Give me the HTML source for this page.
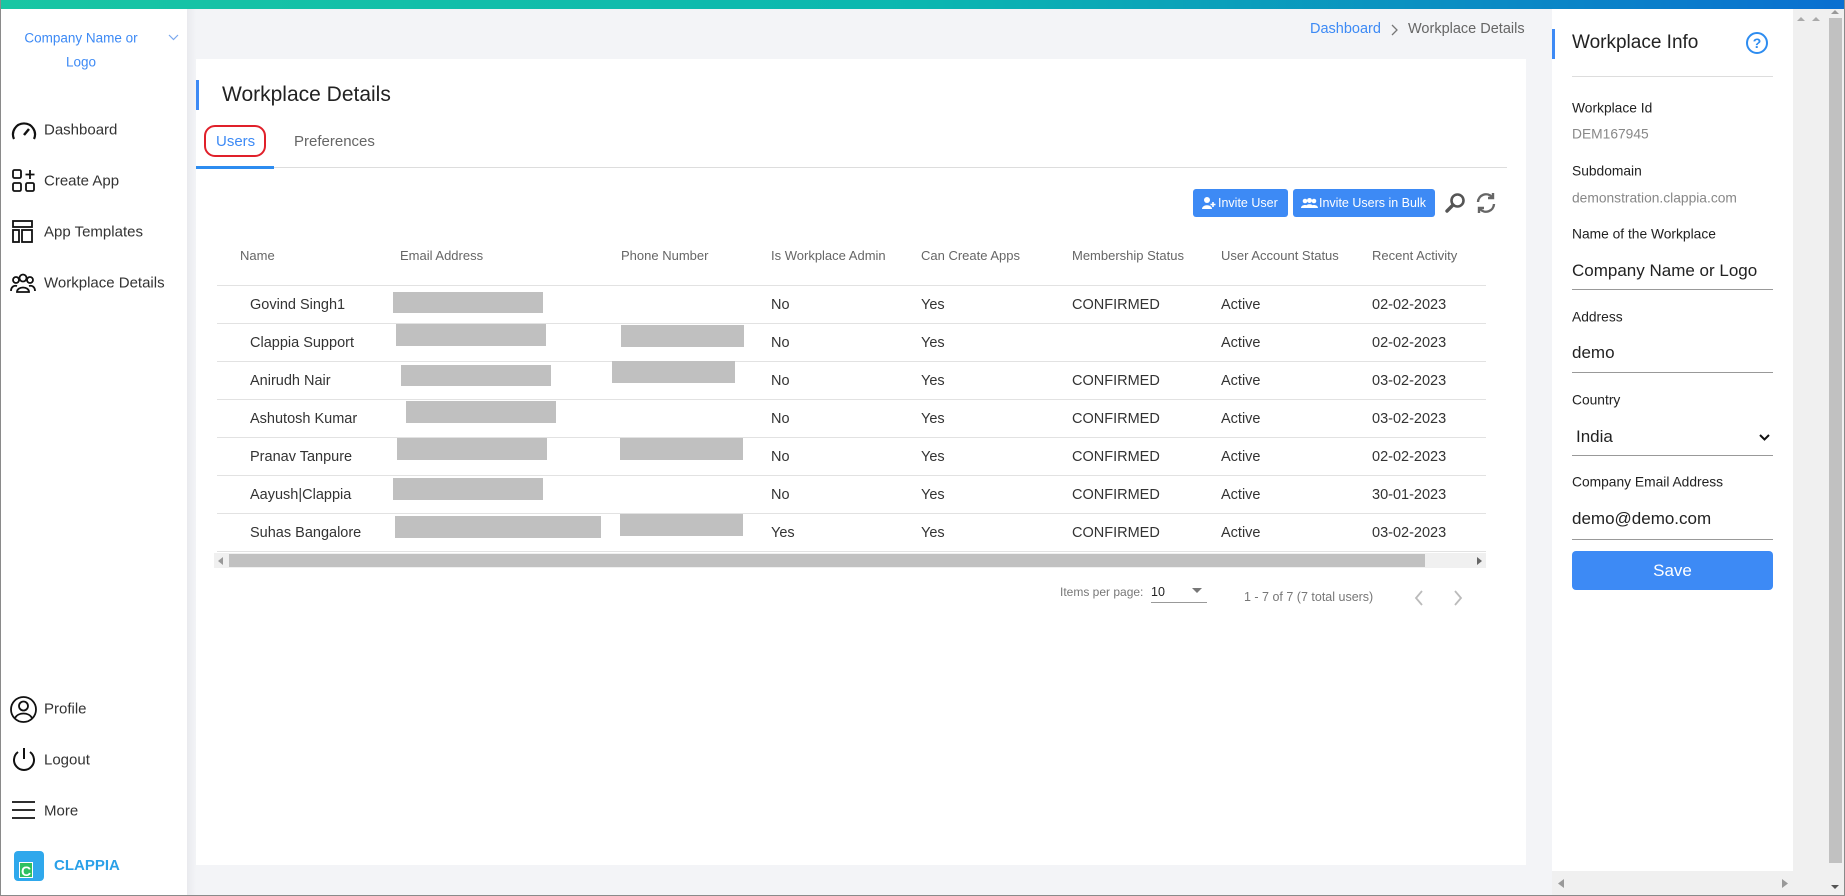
<!DOCTYPE html>
<html><head><meta charset="utf-8"><style>
*{margin:0;padding:0;box-sizing:border-box}
body{width:1845px;height:896px;overflow:hidden;position:relative;background:#f3f4f7;font-family:"Liberation Sans",sans-serif;color:#333}
.a{position:absolute;white-space:nowrap}
.nav{position:absolute;left:44px;font-size:15px;color:#333;transform:translateY(-50%)}
.ic{position:absolute;left:10px}
.th{position:absolute;top:248px;font-size:13px;color:#666}
.cell{position:absolute;font-size:14.5px;color:#333;transform:translateY(-50%)}
.line{position:absolute;left:217px;width:1269px;height:1px;background:#e2e2e2}
.red{position:absolute;background:#c0c0c0}
.lbl{position:absolute;left:1572px;font-size:13.8px;color:#222;transform:translateY(-50%)}
.val{position:absolute;left:1572px;font-size:13.8px;color:#888;transform:translateY(-50%)}
.inp{position:absolute;left:1572px;font-size:17px;color:#222;transform:translateY(-50%)}
.ul{position:absolute;left:1572px;width:201px;height:1px;background:#999}
</style></head><body>
<div class="a" style="left:0;top:0;width:1845px;height:9px;background:linear-gradient(90deg,#19c6a3,#0bb7b0 50%,#0a6fd1)"></div>
<!-- sidebar -->
<div class="a" style="left:1px;top:9px;width:186px;height:886px;background:#fff"></div>
<div class="a" style="left:187px;top:9px;width:9px;height:886px;background:linear-gradient(90deg,#e9eaee,#f3f4f7)"></div>
<div class="a" style="left:0;top:38px;width:162px;text-align:center;font-size:13.5px;color:#3d8af5;transform:translateY(-50%)">Company Name or</div>
<div class="a" style="left:0;top:62px;width:162px;text-align:center;font-size:13.5px;color:#3d8af5;transform:translateY(-50%)">Logo</div>
<svg class="a" style="left:168px;top:34px" width="11" height="8"><path d="M1 1l4.5 4.5L10 1" stroke="#7aa8ee" fill="none" stroke-width="1.2"/></svg>

<svg class="ic" style="top:117px" width="28" height="26" viewBox="0 0 28 26"><path d="M4 22A11 11 0 1 1 24 22" fill="none" stroke="#111" stroke-width="2.2"/><path d="M14 18l5-6" stroke="#111" stroke-width="2.5"/></svg>
<div class="nav" style="top:130px">Dashboard</div>
<svg class="ic" style="top:169px;left:12px" width="24" height="24" viewBox="0 0 24 24" fill="none" stroke="#111" stroke-width="1.8"><rect x="1" y="1" width="8" height="8" rx="1.5"/><rect x="1" y="14" width="8" height="8" rx="1.5"/><rect x="14" y="14" width="8" height="8" rx="1.5"/><path d="M18 1v9M13.5 5.5h9"/></svg>
<div class="nav" style="top:181px">Create App</div>
<svg class="ic" style="top:220px;left:12px" width="24" height="24" viewBox="0 0 24 24" fill="none" stroke="#111" stroke-width="1.8"><rect x="1" y="1" width="19" height="6"/><rect x="1" y="10" width="6" height="12"/><rect x="10" y="10" width="10" height="12"/></svg>
<div class="nav" style="top:232px">App Templates</div>
<svg class="ic" style="top:272px" width="26" height="22" viewBox="0 0 26 22" fill="none" stroke="#111" stroke-width="1.8"><circle cx="13" cy="6" r="3.5"/><circle cx="6" cy="8" r="3"/><circle cx="20" cy="8" r="3"/><path d="M7 20c0-6 12-6 12 0zM1 19c0-4 3-6 6-5M25 19c0-4-3-6-6-5"/></svg>
<div class="nav" style="top:283px">Workplace Details</div>

<svg class="ic" style="top:696px" width="27" height="27" viewBox="0 0 27 27" fill="none" stroke="#111" stroke-width="1.8"><circle cx="13.5" cy="13.5" r="12.5"/><circle cx="13.5" cy="10" r="4.5"/><path d="M5 22c3-6 14-6 17 0"/></svg>
<div class="nav" style="top:709px">Profile</div>
<svg class="ic" style="top:747px;left:12px" width="24" height="26" viewBox="0 0 24 26" fill="none" stroke="#111" stroke-width="2"><path d="M12 1v11"/><path d="M6 5a10 10 0 1 0 12 0"/></svg>
<div class="nav" style="top:760px">Logout</div>
<svg class="ic" style="top:801px;left:12px" width="23" height="18"><path d="M0 1h23M0 9h23M0 17h23" stroke="#111" stroke-width="1.8"/></svg>
<div class="nav" style="top:811px">More</div>
<div class="a" style="left:14px;top:851px;width:30px;height:30px;background:#2fa8ec;border-radius:4px"></div>
<div class="a" style="left:19px;top:862px;width:14px;height:16px;background:#2ec05f;color:#fff;font-weight:bold;font-size:14px;line-height:16px;text-align:center;border:1px solid #fff">C</div>
<div class="a" style="left:54px;top:857px;font-size:15px;font-weight:bold;color:#2aa0e8">CLAPPIA</div>

<!-- breadcrumb -->
<div class="a" style="left:1310px;top:21px;font-size:14.5px;color:#3d8af5">Dashboard</div>
<svg class="a" style="left:1391px;top:24px" width="8" height="12"><path d="M1 1l5 5-5 5" stroke="#777" fill="none" stroke-width="1.3"/></svg>
<div class="a" style="left:1408px;top:21px;font-size:14.5px;color:#666">Workplace Details</div>

<!-- card -->
<div class="a" style="left:196px;top:59px;width:1330px;height:806px;background:#fff"></div>
<div class="a" style="left:196px;top:80px;width:3px;height:30px;background:#3d8af5"></div>
<div class="a" style="left:222px;top:83px;font-size:21px;color:#222">Workplace Details</div>
<div class="a" style="left:204px;top:125px;width:62px;height:32px;border:2px solid #e0202a;border-radius:11px"></div>
<div class="a" style="left:216px;top:133px;font-size:15px;color:#3d8af5">Users</div>
<div class="a" style="left:294px;top:133px;font-size:15px;color:#666">Preferences</div>
<div class="a" style="left:196px;top:167px;width:1311px;height:1px;background:#ddd"></div>
<div class="a" style="left:196px;top:166px;width:78px;height:3px;background:#2d8cf0"></div>

<div class="a" style="left:1193px;top:189px;width:95px;height:28px;background:#3d8af5;border-radius:3px;color:#fff;font-size:12.5px;line-height:28px;padding-left:25px">Invite User</div>
<svg class="a" style="left:1201px;top:196px" width="16" height="14" viewBox="0 0 16 14" fill="#fff"><circle cx="6" cy="4" r="3"/><path d="M1 13c0-5 10-5 10 0z"/><path d="M12 6v5M9.5 8.5h5" stroke="#fff" stroke-width="1.6"/></svg>
<div class="a" style="left:1293px;top:189px;width:142px;height:28px;background:#3d8af5;border-radius:3px;color:#fff;font-size:12.5px;line-height:28px;padding-left:26px">Invite Users in Bulk</div>
<svg class="a" style="left:1301px;top:197px" width="17" height="12" viewBox="0 0 17 12" fill="#fff"><circle cx="4" cy="4" r="2.3"/><circle cx="8.5" cy="3.5" r="2.5"/><circle cx="13" cy="4" r="2.3"/><path d="M0 11c0-4 8-4 8 0zM9 11c0-4 8-4 8 0zM4 11c0-5 9-5 9 0z"/></svg>
<svg class="a" style="left:1445px;top:192px" width="21" height="21" viewBox="0 0 21 21" fill="none" stroke="#555"><circle cx="12.5" cy="8.5" r="6" stroke-width="2.6"/><path d="M8 13l-6 6" stroke-width="3.4" stroke-linecap="round"/></svg>
<svg class="a" style="left:1475px;top:192px" width="22" height="22" viewBox="0 0 22 22" fill="none" stroke="#666" stroke-width="2.4"><path d="M3 10A8 8 0 0 1 17 5"/><path d="M19 12A8 8 0 0 1 5 17"/><path d="M18 1v5h-5M4 21v-5h5"/></svg>

<div class="th" style="left:240px">Name</div>
<div class="th" style="left:400px">Email Address</div>
<div class="th" style="left:621px">Phone Number</div>
<div class="th" style="left:771px">Is Workplace Admin</div>
<div class="th" style="left:921px">Can Create Apps</div>
<div class="th" style="left:1072px">Membership Status</div>
<div class="th" style="left:1221px">User Account Status</div>
<div class="th" style="left:1372px">Recent Activity</div>

<div class="line" style="top:285px"></div>
<div class="line" style="top:323px"></div>
<div class="line" style="top:361px"></div>
<div class="line" style="top:399px"></div>
<div class="line" style="top:437px"></div>
<div class="line" style="top:475px"></div>
<div class="line" style="top:513px"></div>
<div class="line" style="top:551px"></div>

<div class="cell" style="left:250px;top:305px">Govind Singh1</div><div class="cell" style="left:771px;top:305px">No</div><div class="cell" style="left:921px;top:305px">Yes</div><div class="cell" style="left:1072px;top:305px">CONFIRMED</div><div class="cell" style="left:1221px;top:305px">Active</div><div class="cell" style="left:1372px;top:305px">02-02-2023</div>
<div class="cell" style="left:250px;top:343px">Clappia Support</div><div class="cell" style="left:771px;top:343px">No</div><div class="cell" style="left:921px;top:343px">Yes</div><div class="cell" style="left:1221px;top:343px">Active</div><div class="cell" style="left:1372px;top:343px">02-02-2023</div>
<div class="cell" style="left:250px;top:381px">Anirudh Nair</div><div class="cell" style="left:771px;top:381px">No</div><div class="cell" style="left:921px;top:381px">Yes</div><div class="cell" style="left:1072px;top:381px">CONFIRMED</div><div class="cell" style="left:1221px;top:381px">Active</div><div class="cell" style="left:1372px;top:381px">03-02-2023</div>
<div class="cell" style="left:250px;top:419px">Ashutosh Kumar</div><div class="cell" style="left:771px;top:419px">No</div><div class="cell" style="left:921px;top:419px">Yes</div><div class="cell" style="left:1072px;top:419px">CONFIRMED</div><div class="cell" style="left:1221px;top:419px">Active</div><div class="cell" style="left:1372px;top:419px">03-02-2023</div>
<div class="cell" style="left:250px;top:457px">Pranav Tanpure</div><div class="cell" style="left:771px;top:457px">No</div><div class="cell" style="left:921px;top:457px">Yes</div><div class="cell" style="left:1072px;top:457px">CONFIRMED</div><div class="cell" style="left:1221px;top:457px">Active</div><div class="cell" style="left:1372px;top:457px">02-02-2023</div>
<div class="cell" style="left:250px;top:495px">Aayush|Clappia</div><div class="cell" style="left:771px;top:495px">No</div><div class="cell" style="left:921px;top:495px">Yes</div><div class="cell" style="left:1072px;top:495px">CONFIRMED</div><div class="cell" style="left:1221px;top:495px">Active</div><div class="cell" style="left:1372px;top:495px">30-01-2023</div>
<div class="cell" style="left:250px;top:533px">Suhas Bangalore</div><div class="cell" style="left:771px;top:533px">Yes</div><div class="cell" style="left:921px;top:533px">Yes</div><div class="cell" style="left:1072px;top:533px">CONFIRMED</div><div class="cell" style="left:1221px;top:533px">Active</div><div class="cell" style="left:1372px;top:533px">03-02-2023</div>

<div class="red" style="left:393px;top:292px;width:150px;height:21px"></div>
<div class="red" style="left:396px;top:324px;width:150px;height:22px"></div>
<div class="red" style="left:621px;top:325px;width:123px;height:22px"></div>
<div class="red" style="left:401px;top:365px;width:150px;height:21px"></div>
<div class="red" style="left:612px;top:361px;width:123px;height:22px"></div>
<div class="red" style="left:406px;top:401px;width:150px;height:22px"></div>
<div class="red" style="left:397px;top:438px;width:150px;height:22px"></div>
<div class="red" style="left:620px;top:438px;width:123px;height:22px"></div>
<div class="red" style="left:393px;top:478px;width:150px;height:22px"></div>
<div class="red" style="left:395px;top:516px;width:206px;height:22px"></div>
<div class="red" style="left:620px;top:514px;width:123px;height:22px"></div>

<div class="a" style="left:214px;top:553px;width:1272px;height:15px;background:#f0f0f0"></div>
<div class="a" style="left:229px;top:554px;width:1196px;height:13px;background:#c1c1c1"></div>
<svg class="a" style="left:218px;top:557px" width="5" height="8"><path d="M5 0v8L0 4z" fill="#999"/></svg>
<svg class="a" style="left:1477px;top:557px" width="5" height="8"><path d="M0 0v8l5-4z" fill="#666"/></svg>

<div class="a" style="left:1060px;top:585px;font-size:12px;color:#777">Items per page:</div>
<div class="a" style="left:1151px;top:585px;font-size:12.5px;color:#222">10</div>
<svg class="a" style="left:1192px;top:588px" width="10" height="6"><path d="M0 0h10L5 5z" fill="#777"/></svg>
<div class="a" style="left:1151px;top:602px;width:56px;height:1px;background:#999"></div>
<div class="a" style="left:1244px;top:590px;font-size:12.5px;color:#777">1 - 7 of 7 (7 total users)</div>
<svg class="a" style="left:1414px;top:590px" width="10" height="16"><path d="M8 1L2 8l6 7" stroke="#bbb" fill="none" stroke-width="1.8"/></svg>
<svg class="a" style="left:1453px;top:590px" width="10" height="16"><path d="M2 1l6 7-6 7" stroke="#bbb" fill="none" stroke-width="1.8"/></svg>

<!-- right panel -->
<div class="a" style="left:1552px;top:9px;width:241px;height:887px;background:#fff"></div>
<div class="a" style="left:1793px;top:9px;width:33px;height:887px;background:#f0f0f0"></div>
<div class="a" style="left:1552px;top:871px;width:241px;height:25px;background:#f0f0f0"></div>
<svg class="a" style="left:1558px;top:879px" width="6" height="9"><path d="M6 0v9L0 4.5z" fill="#999"/></svg>
<svg class="a" style="left:1782px;top:879px" width="6" height="9"><path d="M0 0v9l6-4.5z" fill="#999"/></svg>
<div class="a" style="left:1552px;top:29px;width:3px;height:30px;background:#3d8af5"></div>
<div class="a" style="left:1572px;top:32px;font-size:19px;color:#222">Workplace Info</div>
<div class="a" style="left:1746px;top:32px;width:22px;height:22px;border:2px solid #2d8cf0;border-radius:50%;color:#2d8cf0;font-size:14px;font-weight:bold;text-align:center;line-height:18px">?</div>
<div class="a" style="left:1572px;top:76px;width:201px;height:1px;background:#ddd"></div>
<div class="lbl" style="top:108px">Workplace Id</div>
<div class="val" style="top:134px">DEM167945</div>
<div class="lbl" style="top:171px">Subdomain</div>
<div class="val" style="top:198px">demonstration.clappia.com</div>
<div class="lbl" style="top:234px">Name of the Workplace</div>
<div class="inp" style="top:271px">Company Name or Logo</div>
<div class="ul" style="top:289px"></div>
<div class="lbl" style="top:317px">Address</div>
<div class="inp" style="top:353px">demo</div>
<div class="ul" style="top:372px"></div>
<div class="lbl" style="top:400px">Country</div>
<div class="inp" style="top:437px;left:1576px">India</div>
<svg class="a" style="left:1759px;top:434px" width="11" height="7"><path d="M1 1l4.5 4.5L10 1" stroke="#111" fill="none" stroke-width="2"/></svg>
<div class="ul" style="top:455px"></div>
<div class="lbl" style="top:482px">Company Email Address</div>
<div class="inp" style="top:519px">demo@demo.com</div>
<div class="ul" style="top:539px"></div>
<div class="a" style="left:1572px;top:551px;width:201px;height:39px;background:#3d8af5;border-radius:4px;color:#fff;font-size:17px;line-height:39px;text-align:center">Save</div>
<svg class="a" style="left:1797px;top:16px" width="30" height="6"><path d="M0 5l4-4 4 4zM15 5l4-4 4 4z" fill="#aaa"/></svg>

<!-- scrollbar -->
<div class="a" style="left:1826px;top:9px;width:18px;height:886px;background:#f0f0f0"></div>
<div class="a" style="left:1829px;top:18px;width:13px;height:845px;background:#c1c1c1"></div>
<svg class="a" style="left:1831px;top:9px" width="8" height="6"><path d="M0 5l4-4 4 4z" fill="#999"/></svg>
<svg class="a" style="left:1831px;top:884px" width="8" height="6"><path d="M0 1l4 4 4-4z" fill="#555"/></svg>
<div class="a" style="left:0;top:0;width:1845px;height:896px;border:1px solid #8a8a8a;border-top:none"></div>
</body></html>
